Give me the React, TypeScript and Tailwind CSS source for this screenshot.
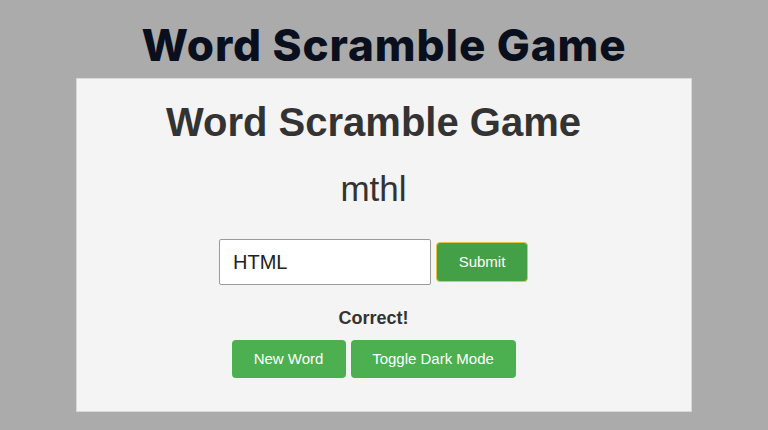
import React from "react";

export default function App() {
  return (
    <div className="w-[768px] h-[430px] bg-[#ababab] flex flex-col items-center overflow-hidden">
      <div
        className="mt-[19px] h-[59px] text-[44px] leading-[52px] font-extrabold text-[#0a0f1d] tracking-[0.9px]"
        style={{ fontFamily: "Inter, 'Open Sans', sans-serif" }}
      >
        Word Scramble Game
      </div>
      <div
        className="w-[616px] h-[334px] bg-[#f4f4f4] border border-[#d8d8d8] pt-[19px] pr-[21px] flex flex-col items-center text-[#333333]"
        style={{ fontFamily: "'Liberation Sans', Arial, sans-serif" }}
      >
        <h1 className="text-[40px] leading-[48px] font-bold">Word Scramble Game</h1>
        <div className="mt-[23px] text-[35px] leading-[40px]">mthl</div>
        <div className="mt-[30px] flex items-center gap-[5px]">
          <div className="w-[212px] h-[46px] bg-white border border-[#9a9a9a] rounded-[2px] flex items-center pl-[13px] text-[20px] text-[#222]">
            HTML
          </div>
          <button className="w-[92px] h-[40px] bg-[#43a047] border border-[#e2c241] rounded-[4px] text-white text-[15px]">
            Submit
          </button>
        </div>
        <div className="mt-[22px] text-[18px] leading-[22px] font-bold">Correct!</div>
        <div className="mt-[11px] flex gap-[5px]">
          <button className="w-[114px] h-[38px] bg-[#4caf50] rounded-[4px] text-white text-[15px]">
            New Word
          </button>
          <button className="w-[165px] h-[38px] bg-[#4caf50] rounded-[4px] text-white text-[15px]">
            Toggle Dark Mode
          </button>
        </div>
      </div>
    </div>
  );
}
